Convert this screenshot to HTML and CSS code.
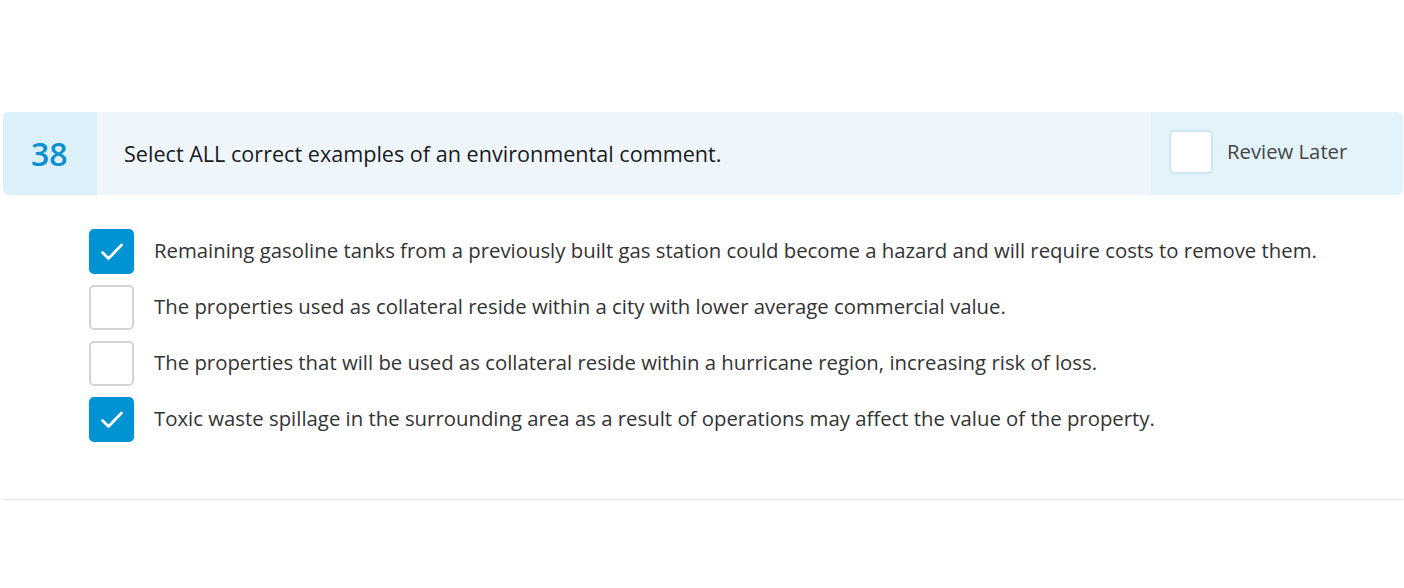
FILE: index.html
```html
<!DOCTYPE html>
<html>
<head>
<meta charset="utf-8">
<link rel="stylesheet" href="styles.css">
</head>
<body>
<div class="page">
  <div class="qhead">
    <div class="qnum">38</div>
    <div class="qtext">Select ALL correct examples of an environmental comment.</div>
    <div class="review">
      <span class="rbox"></span>
      <span class="rlabel">Review Later</span>
    </div>
  </div>
  <ul class="options">
    <li class="opt"><span class="box checked"><svg viewBox="0 0 24 20" width="24" height="20"><path d="M2.5 10.5L8.5 16.5L21.5 3" fill="none" stroke="#fff" stroke-width="2.8" stroke-linecap="round" stroke-linejoin="round"/></svg></span><span class="otext">Remaining gasoline tanks from a previously built gas station could become a hazard and will require costs to remove them.</span></li>
    <li class="opt"><span class="box"></span><span class="otext">The properties used as collateral reside within a city with lower average commercial value.</span></li>
    <li class="opt"><span class="box"></span><span class="otext">The properties that will be used as collateral reside within a hurricane region, increasing risk of loss.</span></li>
    <li class="opt"><span class="box checked"><svg viewBox="0 0 24 20" width="24" height="20"><path d="M2.5 10.5L8.5 16.5L21.5 3" fill="none" stroke="#fff" stroke-width="2.8" stroke-linecap="round" stroke-linejoin="round"/></svg></span><span class="otext">Toxic waste spillage in the surrounding area as a result of operations may affect the value of the property.</span></li>
  </ul>
  <div class="divider"></div>
</div>
</body>
</html>
```
FILE: styles.css
```css
* { box-sizing: border-box; }
html, body { margin: 0; padding: 0; background: #fff; }
body { font-family: "Open Sans", "Noto Sans", sans-serif; color: #333; }
.page { padding: 112px 1px 0 3px; }
.qhead {
  display: flex;
  align-items: stretch;
  height: 83px;
  background: #eef6fc;
  border-radius: 6px;
  overflow: hidden;
}
.qnum {
  width: 94px;
  background: #dcf0fa;
  color: #0a8fd1;
  font-size: 32px;
  font-weight: 600;
  display: flex;
  align-items: center;
  padding-left: 28px;
}
.qtext {
  flex: 1;
  display: flex;
  align-items: center;
  padding-left: 27px;
  font-size: 21.6px;
  color: #1a1a1a;
}
.review {
  width: 252px;
  background: #e3f3fb;
  display: flex;
  align-items: center;
  padding-left: 18px;
  padding-bottom: 4px;
  gap: 14px;
}
.rbox {
  width: 44px;
  height: 44px;
  background: #fff;
  border: 2px solid #cde6f3;
  border-radius: 5px;
}
.rlabel { font-size: 20.3px; color: #444; margin-top: -2px; }
.options {
  list-style: none;
  margin: 0;
  padding: 34px 0 0 86px;
  display: flex;
  flex-direction: column;
  gap: 11px;
}
.opt { display: flex; align-items: center; gap: 20px; height: 45px; }
.box {
  width: 45px;
  height: 45px;
  border: 2px solid #d4d4d4;
  border-radius: 5px;
  background: #fff;
  display: flex;
  align-items: center;
  justify-content: center;
  flex: none;
}
.box.checked { background: #0093d3; border-color: #0093d3; }
.otext { font-size: 20.35px; color: #333; margin-top: -4px; }
.divider { margin-top: 57px; height: 1px; background: #e6e6e6; }
```
